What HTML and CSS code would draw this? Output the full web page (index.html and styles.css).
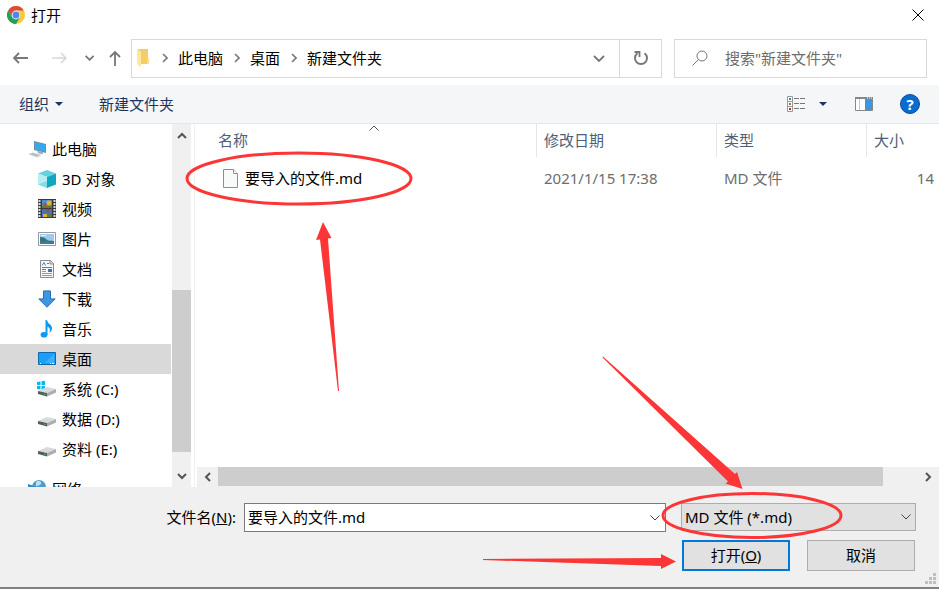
FILE: index.html
```
<!DOCTYPE html>
<html lang="zh-CN">
	<head>
		<meta charset="UTF-8">
		<title>打开</title>
		<link rel="stylesheet" href="styles.css">
	</head>
	<body>
		<div class="titlebar">
			<svg class="logo" width="18" height="18" viewBox="0 0 18 18">
				<circle cx="9" cy="9" r="9" fill="#fbc834"/>
				<path d="M1.2 4.5A9 9 0 0 1 16.8 4.5H9L5.2 11.2z" fill="#dc4a3d"/>
				<path d="M1.2 4.5A9 9 0 0 0 9 18L12.9 11.2 9 13 5.2 11.2z" fill="#1fa05c"/>
				<circle cx="9" cy="9" r="4.4" fill="#f4f4f4"/>
				<circle cx="9" cy="9" r="3.4" fill="#4a87ee"/>
			</svg>
			<h1>打开</h1>
			<button class="close" aria-label="关闭">
				<svg width="12" height="12" viewBox="0 0 12 12"><path d="M.5.5l11 11M11.5.5l-11 11" stroke="#000" fill="none"/></svg>
			</button>
		</div>

		<div class="nav">
			<button class="back" aria-label="后退">
				<svg width="16" height="12" viewBox="0 0 16 12"><path d="M15 6H1M6 1L1 6l5 5" stroke="#777" stroke-width="1.800" fill="none"/></svg>
			</button>
			<button class="forward" aria-label="前进">
				<svg width="16" height="12" viewBox="0 0 16 12"><path d="M0 6h14M9 1l5 5-5 5" stroke="#d8d8d8" stroke-width="1.600" fill="none"/></svg>
			</button>
			<button class="recent" aria-label="最近浏览的位置">
				<svg width="10" height="6" viewBox="0 0 10 6"><path d="M.6.8l4 4 4-4" stroke="#777" stroke-width="1.800" fill="none"/></svg>
			</button>
			<button class="up" aria-label="上移">
				<svg width="12" height="16" viewBox="0 0 12 16"><path d="M6 16V2M1 7l5-5 5 5" stroke="#777" stroke-width="1.800" fill="none"/></svg>
			</button>
			<div class="address">
				<svg class="folder" width="13" height="18" viewBox="0 0 13 18">
					<path d="M1 0h10v9h1v6H1z" fill="#f2cd68"/>
					<path d="M0 1l4 1.500v15.500L0 15z" fill="#ffe79d"/>
					<path d="M10 9h2v6h-2z" fill="#f8dc86"/>
				</svg>
				<svg class="sep" width="6" height="10" viewBox="0 0 6 10"><path d="M1 1l4 4-4 4" stroke="#777" stroke-width="1.600" fill="none"/></svg>
				<a href="#">此电脑</a>
				<svg class="sep" width="6" height="10" viewBox="0 0 6 10"><path d="M1 1l4 4-4 4" stroke="#777" stroke-width="1.600" fill="none"/></svg>
				<a href="#">桌面</a>
				<svg class="sep" width="6" height="10" viewBox="0 0 6 10"><path d="M1 1l4 4-4 4" stroke="#777" stroke-width="1.600" fill="none"/></svg>
				<a href="#">新建文件夹</a>
				<button class="drop" aria-label="以前的位置">
					<svg width="12" height="8" viewBox="0 0 12 8"><path d="M1 2l5 5 5-5" stroke="#777" stroke-width="1.800" fill="none"/></svg>
				</button>
				<button class="refresh" aria-label="刷新">
					<svg width="16" height="16" viewBox="0 0 16 16">
						<path d="M11.500 3.200A6 6 0 1 1 4.500 3.200" stroke="#777" stroke-width="2" fill="none"/>
						<path d="M1.500 2h5v5" stroke="#777" stroke-width="1.800" fill="none"/>
					</svg>
				</button>
			</div>
			<div class="search">
				<svg width="16" height="16" viewBox="0 0 16 16"><circle cx="10" cy="6" r="5" stroke="#777" fill="none"/><path d="M6.500 9.500L.5 15.500" stroke="#777" fill="none"/></svg>
				<input type="text" aria-label="搜索" placeholder='搜索"新建文件夹"'>
			</div>
		</div>

		<div class="toolbar">
			<button class="organize">组织
				<svg width="8" height="4" viewBox="0 0 8 4"><path d="M0 0h8L4 4z" fill="#1c3560"/></svg>
			</button>
			<button class="newdir">新建文件夹</button>
			<button class="view" aria-label="更改视图">
				<svg width="19" height="16" viewBox="0 0 19 16">
					<path d="M.5.5h5v15h-5zM.5 5.500h5M.5 10.500h5" stroke="#999" fill="#fff"/>
					<path d="M2 2h2v2H2z" fill="#3b82c4"/>
					<path d="M2 7h2v2H2z" fill="#8a7a2c"/>
					<path d="M2 12h2v2H2z" fill="#c22d10"/>
					<path d="M7 2.500h5M13 2.500h5M7 7.500h5M13 7.500h5M7 12.500h5M13 12.500h5" stroke="#777"/>
				</svg>
			</button>
			<button class="viewmore" aria-label="更多选项">
				<svg width="8" height="4" viewBox="0 0 8 4"><path d="M0 0h8L4 4z" fill="#1c3560"/></svg>
			</button>
			<button class="preview" aria-label="显示预览窗格">
				<svg width="18" height="14" viewBox="0 0 18 14">
					<path d="M.5.5h17v13H.5z" stroke="#808890" fill="#fff"/>
					<path d="M0 0h18v2H0z" fill="#808890"/>
					<path d="M4.500 2v11" stroke="#c4c8cc"/>
					<path d="M10 2h7v11h-7z" fill="#3e96e0"/>
					<path d="M12 1h1M14 1h1M16 1h1" stroke="#fff"/>
				</svg>
			</button>
			<button class="help" aria-label="帮助">?</button>
		</div>

		<div class="main">
			<div class="tree">
				<ul>
					<li class="root">
						<svg width="20" height="18" viewBox="0 0 20 18">
							<path d="M6 1l12 3v9L6 10z" fill="#6f8ca3"/>
							<path d="M7 2.200l10.200 2.600v7L7 9.200z" fill="#35a9f0"/>
							<path d="M9 10.500l6 1.700v2l-5-1z" fill="#9fb0bc"/>
							<path d="M0 14l5-1.500 9 2.500-5 2.500z" fill="#ccd5da"/>
							<path d="M2 14l7 2.200M4 13.300l7 2.200" stroke="#9ba8b0" stroke-width=".6"/>
						</svg>此电脑</li>
					<li>
						<svg width="20" height="18" viewBox="0 0 20 18">
							<path d="M1 3.500L10 0l9 3.500-9 3.500z" fill="#62d3de"/>
							<path d="M1 3.500L10 7v11l-9-3.500z" fill="#b9eef0"/>
							<path d="M19 3.500L10 7v11l9-3.500z" fill="#10a6bd"/>
							<path d="M1 14.500l9-3.500v7z" fill="#7fdde4"/>
						</svg>3D 对象</li>
					<li>
						<svg width="20" height="20" viewBox="0 0 20 20">
							<path d="M1 0h18v19H1z" fill="#3a3a3a"/>
							<path d="M5 1h10v8H5z" fill="#4f8ad6"/>
							<path d="M5 10h10v8H5z" fill="#3f74c0"/>
							<path d="M2.500 1v17M17.500 1v17" stroke="#ddd" stroke-width="2" stroke-dasharray="2 1"/>
							<circle cx="12" cy="4" r="2.400" fill="#e4b728"/>
							<circle cx="8" cy="5.500" r="1.600" fill="#c93a2d"/>
							<path d="M5 7h10v2H5z" fill="#5d7d32"/>
							<path d="M9 10h4l-1 3h-2z" fill="#c93a2d"/>
							<path d="M6 15h4v3H6z" fill="#dcb42c"/>
							<path d="M11 16l4-2v4h-4z" fill="#5d7d32"/>
						</svg>视频</li>
					<li>
						<svg width="20" height="16" viewBox="0 0 20 16">
							<path d="M1.500 1.500h17v13h-17z" fill="#fff" stroke="#999"/>
							<path d="M3 3h14v10H3z" fill="#9fc8ee"/>
							<path d="M3 6l4 .5 4 3 6 .5v1H3z" fill="#34776a"/>
							<path d="M3 10.500h14V13H3z" fill="#3d78ad"/>
							<path d="M4 4.500h5" stroke="#e9f4fd"/>
						</svg>图片</li>
					<li>
						<svg width="20" height="18" viewBox="0 0 20 18">
							<path d="M3.500.5h10l3 3v14h-13z" fill="#f7f7f7" stroke="#8b8b8b"/>
							<path d="M13 .5v3.500h3.500" fill="#ddd" stroke="#8b8b8b"/>
							<path d="M5 5.500l2-3 1.500 3M10 3.500h2M5 7.500h10M5 9.500h4" stroke="#3489c6" fill="none"/>
							<path d="M11 9h4v3h-4z" fill="#3b76ad"/>
							<path d="M5 11.500h4M5 13.500h10M5 15.500h10" stroke="#999"/>
						</svg>文档</li>
					<li>
						<svg width="20" height="18" viewBox="0 0 20 18"><path d="M6.500.9h7v8h4.700L10 17.200 1.800 8.900h4.700z" fill="#3c96e4" stroke="#2672b8"/></svg>下载</li>
					<li>
						<svg width="20" height="18" viewBox="0 0 20 18">
							<ellipse cx="7" cy="14.800" rx="3.400" ry="2.800" fill="#0a9bf7"/>
							<path d="M8.500 0H10c.4 4 5.500 4.500 5 8.500-.2 2-1.500 3.500-2.500 4.500.8-3 .8-5-2-6.300V15h-2z" fill="#0a9bf7"/>
						</svg>音乐</li>
					<li class="on">
						<svg width="20" height="16" viewBox="0 0 20 16">
							<path d="M1.500 1.500h17v12h-17z" fill="#18a0fa" stroke="#1268a8"/>
							<path d="M8 12l9-9v9z" fill="#3cb0ff"/>
							<path d="M3 12.500h1M13 12.500h1M15 12.500h2" stroke="#fff"/>
						</svg>桌面</li>
					<li>
						<svg width="20" height="18" viewBox="0 0 20 18">
							<path d="M0 2l3.500-.6V5H0zM4.500 1.300L8 .8V5H4.500zM0 6h3.500v3.500L0 9zM4.500 6H8v4l-3.500-.5z" fill="#08b8f0"/>
							<path d="M1 11l9-4 9 2-9 4z" fill="#d9dadc"/>
							<path d="M1 11l9 2v3.500l-9-2.500z" fill="#5a5a5a"/>
							<path d="M10 13l9-4v3.500l-9 4z" fill="#adadaf"/>
							<path d="M7 14l1.500.4" stroke="#44d044"/>
						</svg>系统 (C:)</li>
					<li>
						<svg width="20" height="18" viewBox="0 0 20 18">
							<path d="M1 11l9-4 9 2-9 4z" fill="#d9dadc"/>
							<path d="M1 11l9 2v3.500l-9-2.500z" fill="#5a5a5a"/>
							<path d="M10 13l9-4v3.500l-9 4z" fill="#adadaf"/>
							<path d="M7 14l1.500.4" stroke="#44d044"/>
						</svg>数据 (D:)</li>
					<li>
						<svg width="20" height="18" viewBox="0 0 20 18">
							<path d="M1 11l9-4 9 2-9 4z" fill="#d9dadc"/>
							<path d="M1 11l9 2v3.500l-9-2.500z" fill="#5a5a5a"/>
							<path d="M10 13l9-4v3.500l-9 4z" fill="#adadaf"/>
							<path d="M7 14l1.500.4" stroke="#44d044"/>
						</svg>资料 (E:)</li>
					<li class="root network">
						<svg width="20" height="18" viewBox="0 0 20 18">
							<circle cx="11" cy="7" r="7" fill="#4e9cc8"/>
							<path d="M8 2c3-3 6 0 5 2s-4 1-5 3z" fill="#b8e0ee"/>
							<path d="M0 4l9 3v8l-9-3z" fill="#2f8dc0"/>
						</svg>网络</li>
				</ul>
			</div>
			<div class="vbar">
				<button aria-label="向上滚动"><svg width="10" height="7" viewBox="0 0 10 7"><path d="M1 6l4-4 4 4" stroke="#555" stroke-width="2" fill="none"/></svg></button>
				<div class="vtrack"><span class="vthumb"></span></div>
				<button aria-label="向下滚动"><svg width="10" height="7" viewBox="0 0 10 7"><path d="M1 1l4 4 4-4" stroke="#555" stroke-width="2" fill="none"/></svg></button>
			</div>
			<div class="files">
				<table>
					<thead>
						<tr>
							<th class="name">名称
								<svg class="sort" width="10" height="6" viewBox="0 0 10 6"><path d="M.5 5.500L5 1l4.500 4.500" stroke="#555" fill="none"/></svg>
							</th>
							<th class="date">修改日期</th>
							<th class="type">类型</th>
							<th class="size">大小</th>
						</tr>
					</thead>
					<tbody>
						<tr>
							<td class="name">
								<div class="file">
									<svg width="15" height="19" viewBox="0 0 15 19">
										<path d="M.5.5h10l4 4v14H.5z" fill="#f8f9f9" stroke="#8e8e8e"/>
										<path d="M10.500.5v4h4" fill="#fff" stroke="#8e8e8e"/>
									</svg>
									要导入的文件.md
								</div>
							</td>
							<td>2021/1/15 17:38</td>
							<td>MD 文件</td>
							<td class="num">14</td>
						</tr>
					</tbody>
				</table>
				<div class="hbar">
					<button aria-label="向左滚动"><svg width="7" height="10" viewBox="0 0 7 10"><path d="M6 1L2 5l4 4" stroke="#555" stroke-width="2" fill="none"/></svg></button>
					<div class="htrack"><span class="hthumb"></span></div>
					<button aria-label="向右滚动"><svg width="7" height="10" viewBox="0 0 7 10"><path d="M1 1l4 4-4 4" stroke="#555" stroke-width="2" fill="none"/></svg></button>
				</div>
			</div>
		</div>

		<div class="footer">
			<div class="row">
				<label for="filename">文件名(<u>N</u>):</label>
				<div class="combo">
					<input type="text" id="filename" value="要导入的文件.md">
					<button aria-label="历史文件名"><svg width="10" height="6" viewBox="0 0 10 6"><path d="M.5.5L5 5 9.500.5" stroke="#444" fill="none"/></svg></button>
				</div>
				<div class="filter">
					<select aria-label="文件类型">
						<option>MD 文件 (*.md)</option>
					</select>
					<svg width="10" height="6" viewBox="0 0 10 6"><path d="M.5.5L5 5 9.500.5" stroke="#444" fill="none"/></svg>
				</div>
			</div>
			<div class="row btns">
				<button class="btn ok">打开(<u>O</u>)</button>
				<button class="btn">取消</button>
			</div>
			<svg class="grip" width="11" height="11" viewBox="0 0 11 11"><path d="M8 0h3v3H8zM4 4h3v3H4zM8 4h3v3H8zM0 8h3v3H0zM4 8h3v3H4zM8 8h3v3H8z" fill="#bfbfbf"/></svg>
		</div>

		<!-- 红色标注 -->
		<svg class="marks" width="939" height="589" viewBox="0 0 939 589">
			<ellipse cx="299" cy="178.500" rx="112" ry="25.500"/>
			<ellipse cx="752" cy="515.500" rx="89" ry="22"/>
			<path d="M323 222l8.500 16-3.500.5L339 391h-1L320 239.500l-4 .5z"/>
			<path d="M603 356.500l132 117.500 2-2 5.500 17-17-5.500 2.500-2L602.500 357.500z"/>
			<path d="M483 559l178-1v-4l15 7.500-15 7.500v-3L483 560z"/>
		</svg>
	</body>
</html>
```
FILE: styles.css
```
*{
	margin: 0;
	padding: 0;
	box-sizing: border-box;
}
body{
	display: flex;
	flex-direction: column;
	position: relative;
	height: 100vh;
	overflow: hidden;
	background-color: #fff;
	border-bottom: 2px solid #808080;
	color: #000;
	font: 15px/20px "Noto Sans", "Noto Sans CJK SC", sans-serif;
}
button, input, select{
	font: inherit;
	color: inherit;
	border: 0;
	background: none;
	outline: none;
}
svg{
	display: block;
	flex: none;
}
a{
	color: inherit;
	text-decoration: none;
}

/* 标题栏 */
.titlebar{
	display: flex;
	align-items: center;
	height: 30px;
	padding: 0 15px 0 7px;
}
.titlebar h1{
	flex: 1;
	margin-left: 6px;
	font-size: 15px;
	font-weight: normal;
}

/* 导航 */
.nav{
	display: flex;
	align-items: center;
	height: 55px;
	padding: 1px 12px 0 13px;
}
.nav .forward{
	margin-left: 23px;
}
.nav .recent{
	margin-left: 17px;
}
.nav .up{
	margin: 0 10px 0 14px;
}
.address{
	display: flex;
	flex: 1;
	align-items: center;
	height: 39px;
	padding-left: 5px;
	border: 1px solid #d9d9d9;
}
.address .sep{
	margin: 0 10px 0 11px;
}
.address .folder + .sep{
	margin-left: 12px;
}
.address .drop{
	margin-left: auto;
	padding: 0 14px;
}
.address .refresh{
	display: flex;
	align-items: center;
	justify-content: center;
	width: 42px;
	height: 37px;
	border-left: 1px solid #d9d9d9;
}
.search{
	display: flex;
	align-items: center;
	width: 253px;
	height: 39px;
	margin-left: 12px;
	padding-left: 17px;
	border: 1px solid #d9d9d9;
}
.search input{
	flex: 1;
	min-width: 0;
	margin-left: 17px;
}
.search input::placeholder{
	color: #6d6d6d;
	opacity: 1;
}

/* 工具栏 */
.toolbar{
	display: flex;
	align-items: center;
	height: 39px;
	padding: 0 19px;
	background-color: #f5f6f8;
	border-bottom: 1px solid #e5e7ea;
	color: #1c3560;
}
.toolbar .organize{
	display: flex;
	align-items: center;
	gap: 6px;
}
.toolbar .newdir{
	margin: 0 auto 0 36px;
}
.toolbar .viewmore{
	margin: 0 28px 0 13px;
}
.toolbar .help{
	width: 20px;
	height: 20px;
	margin-left: 27px;
	border: 1px solid #0a4f98;
	border-radius: 50%;
	background-color: #0a6ccf;
	color: #fff;
	font-weight: bold;
	line-height: 18px;
}

/* 主体 */
.main{
	display: flex;
	flex: 1;
	min-height: 0;
}
.tree{
	width: 172px;
	overflow: hidden;
}
.tree ul{
	padding: 10px 1px 0 0;
	list-style: none;
}
.tree li{
	display: flex;
	align-items: center;
	gap: 5px;
	height: 30px;
	padding-left: 37px;
}
.tree .root{
	gap: 4px;
	padding-left: 28px;
}
.tree .network{
	margin-top: 10px;
}
.tree .on{
	background-color: #d9d9d9;
}
.vbar{
	display: flex;
	flex-direction: column;
	width: 19px;
	background-color: #f0f0f0;
}
.vbar button{
	display: flex;
	align-items: center;
	justify-content: center;
	height: 22px;
}
.vtrack{
	display: flex;
	flex: 1;
	align-items: flex-end;
	padding-bottom: 13px;
}
.vthumb{
	width: 100%;
	height: 53%;
	background-color: #cdcdcd;
}
.files{
	display: flex;
	flex: 1;
	flex-direction: column;
	justify-content: space-between;
	min-width: 0;
	margin-left: 3px;
	border-left: 1px solid #f0f0f0;
}
.files table{
	width: 100%;
	table-layout: fixed;
	border-spacing: 0;
	color: #6d6d6d;
}
.files th{
	position: relative;
	height: 33px;
	padding: 0 0 2px 7px;
	border-left: 1px solid #e5e5e5;
	color: #4c607a;
	font-weight: normal;
	text-align: left;
}
.files th.name{
	padding-left: 23px;
	border-left: 0;
}
.files .date{
	width: 180px;
}
.files .type{
	width: 150px;
}
.files .size{
	width: 73px;
}
/* 排序箭头 */
.files .sort{
	position: absolute;
	top: 1px;
	left: 174px;
}
.files td{
	height: 42px;
	padding-left: 8px;
}
.files td.name{
	padding-left: 28px;
	color: #000;
}
.files .file{
	display: flex;
	align-items: center;
	gap: 7px;
}
.files td.num{
	padding-right: 5px;
	text-align: right;
}
.hbar{
	display: flex;
	height: 20px;
	margin-left: 2px;
	border-bottom: 1px solid #f0f0f0;
	background-color: #f0f0f0;
}
.hbar button{
	display: flex;
	align-items: center;
	justify-content: center;
	width: 21px;
}
.htrack{
	flex: 1;
}
.hthumb{
	display: block;
	width: 95%;
	height: 100%;
	background-color: #cdcdcd;
}

/* 底部 */
.footer{
	position: relative;
	height: 100px;
	padding: 16px 23px 0 24px;
	background-color: #f0f0f0;
}
.footer .row{
	display: flex;
	align-items: flex-start;
}
.footer label{
	width: 212px;
	margin-right: 8px;
	line-height: 28px;
	text-align: right;
}
.combo{
	display: flex;
	flex: 1;
	height: 29px;
	border: 1px solid #7a7a7a;
	background-color: #fff;
}
.combo input{
	flex: 1;
	min-width: 0;
	padding: 0 0 2px 3px;
}
.combo button{
	padding: 0 5px;
}
.filter{
	position: relative;
	width: 235px;
	margin-left: 15px;
}
.filter select{
	display: block;
	width: 100%;
	height: 28px;
	padding: 0 0 1px 3px;
	border: 1px solid #adadad;
	background-color: #e1e1e1;
	appearance: none;
}
.filter svg{
	position: absolute;
	top: 11px;
	right: 5px;
	pointer-events: none;
}
.btns{
	gap: 17px;
	justify-content: flex-end;
	margin-top: 8px;
	padding-right: 1px;
}
.btn{
	width: 108px;
	height: 31px;
	padding-bottom: 2px;
	border: 1px solid #adadad;
	background-color: #e1e1e1;
}
.btn.ok{
	border: 2px solid #0078d7;
}
.grip{
	position: absolute;
	right: 3px;
	bottom: 3px;
}

.marks{
	position: absolute;
	top: 0;
	left: 0;
	pointer-events: none;
}
.marks ellipse{
	fill: none;
	stroke: #fc3636;
	stroke-width: 3px;
}
.marks path{
	fill: #fc3636;
}
```
